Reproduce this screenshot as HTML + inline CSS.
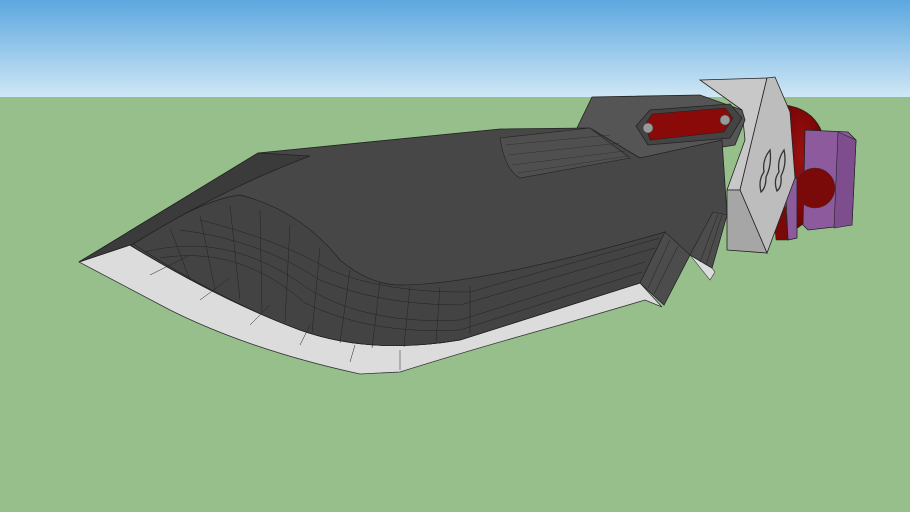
<!DOCTYPE html>
<html><head><meta charset="utf-8"><style>
html,body{margin:0;padding:0;width:910px;height:512px;overflow:hidden;background:#97bf8b}
svg{display:block}
</style></head><body>
<svg width="910" height="512" viewBox="0 0 910 512" xmlns="http://www.w3.org/2000/svg">
<defs>
<linearGradient id="sky" x1="0" y1="0" x2="0" y2="1">
<stop offset="0" stop-color="#5ba7df"/><stop offset="1" stop-color="#cfe7f5"/>
</linearGradient>
<radialGradient id="rd" cx="0.4" cy="0.4" r="0.7">
<stop offset="0" stop-color="#9a1010"/><stop offset="1" stop-color="#6a0000"/>
</radialGradient>
</defs>
<rect x="0" y="0" width="910" height="97" fill="url(#sky)"/>
<rect x="0" y="97" width="910" height="415" fill="#97bf8b"/>

<!-- pommel & purple -->
<path d="M785,105 Q822,110 826,150 Q828,215 790,232 Z" fill="url(#rd)" stroke="#222" stroke-width="0.8"/>
<polygon points="805,130 848,132 856,140 852,225 808,230 803,225" fill="#8e5a9e" stroke="#222" stroke-width="0.8"/>
<polygon points="838,132 856,140 852,225 834,228" fill="#7d4d8e" stroke="#222" stroke-width="0.6"/>
<circle cx="815" cy="188" r="20" fill="#7a0a0a" stroke="#333" stroke-width="0.5"/>
<polygon points="785,180 797,178 797,238 788,240" fill="#8e5a9e" stroke="#222" stroke-width="0.8"/>
<polygon points="773,208 785,200 788,240 776,240" fill="#7a0a0a" stroke="#222" stroke-width="0.5"/>

<!-- guard -->
<polygon points="700,80 767,78 740,190 727,190 745,140 742,110" fill="#c8c8c8" stroke="#222" stroke-width="0.8"/>
<polygon points="767,78 775,77 790,112 795,178 767,253 740,190" fill="#bdbdbd" stroke="#222" stroke-width="0.8"/>
<polygon points="727,190 740,190 767,253 727,250" fill="#a6a6a6" stroke="#222" stroke-width="0.8"/>
<path d="M770,150 q-8,10 -6,22 q-6,8 -3,20 q5,-4 5,-15 q6,-12 4,-27z" fill="none" stroke="#333" stroke-width="1.3"/>
<path d="M784,150 q-7,10 -5,22 q-6,8 -2,19 q5,-4 4,-15 q6,-12 3,-26z" fill="none" stroke="#333" stroke-width="1.3"/>

<!-- handle block -->
<polygon points="592,97 700,95 742,110 745,120 735,145 640,160 577,128" fill="#555" stroke="#222" stroke-width="0.8"/>
<polygon points="636,126 650,110 730,104 742,118 730,138 648,145" fill="#444" stroke="#222" stroke-width="0.8"/>
<polygon points="645,125 652,114 725,108 733,118 724,132 650,140" fill="#8a0a0a" stroke="#222" stroke-width="0.6"/>
<circle cx="648" cy="128" r="5" fill="#999" stroke="#444" stroke-width="0.6"/>
<circle cx="725" cy="120" r="5" fill="#999" stroke="#444" stroke-width="0.6"/>

<!-- white edge -->
<path d="M79,262 L128,244 Q220,300 300,330 Q370,355 460,340 L640,283 L662,307 L645,300 L560,325 Q470,350 400,372 L360,374 Q250,350 170,310 Z" fill="#dcdcdc" stroke="#333" stroke-width="0.8"/>
<polygon points="690,255 710,280 715,272 698,250" fill="#dcdcdc" stroke="#333" stroke-width="0.6"/>

<!-- main dark body -->
<path d="M79,262 L258,153 L500,129 L590,128 L640,158 L722,140 L727,215 L712,268 L690,255 L664,305 L640,283 L460,340 Q370,355 300,330 Q220,300 130,245 Z" fill="#474747" stroke="#222" stroke-width="0.8"/>
<!-- grid face -->
<path d="M133,244 Q200,200 240,195 Q300,210 340,260 Q370,285 400,285 Q480,285 665,232 L640,283 L460,340 Q370,355 300,330 Q220,300 133,244 Z" fill="#434343" stroke="#222" stroke-width="0.7"/>
<!-- tooth faces -->
<polygon points="665,232 690,255 664,305 640,283" fill="#4c4c4c" stroke="#222" stroke-width="0.6"/>
<polygon points="713,212 727,215 712,268 690,255" fill="#4c4c4c" stroke="#222" stroke-width="0.6"/>
<g stroke="#222" stroke-width="0.5" fill="none">
<path d="M145,252 Q230,230 310,290 Q370,325 460,320 L645,262"/>
<path d="M160,258 Q240,245 305,303 Q370,335 460,330 L642,272"/>
<path d="M180,230 Q260,240 320,280 Q380,305 460,305 L655,248"/>
<path d="M200,220 Q280,240 330,270 Q385,293 470,292 L660,238"/>
<line x1="170" y1="228" x2="190" y2="280"/><line x1="200" y1="215" x2="215" y2="290"/>
<line x1="230" y1="205" x2="240" y2="300"/><line x1="260" y1="210" x2="262" y2="312"/>
<line x1="290" y1="225" x2="285" y2="322"/><line x1="320" y1="248" x2="312" y2="333"/>
<line x1="350" y1="270" x2="340" y2="343"/><line x1="380" y1="282" x2="372" y2="348"/>
<line x1="410" y1="286" x2="404" y2="347"/><line x1="440" y1="287" x2="436" y2="342"/>
<line x1="470" y1="286" x2="470" y2="334"/>
<line x1="150" y1="275" x2="190" y2="255"/><line x1="200" y1="300" x2="230" y2="278"/>
<line x1="250" y1="325" x2="270" y2="305"/><line x1="300" y1="345" x2="310" y2="325"/>
<line x1="350" y1="362" x2="355" y2="345"/><line x1="400" y1="370" x2="400" y2="350"/>
<line x1="670" y1="240" x2="648" y2="288"/><line x1="678" y1="246" x2="654" y2="294"/>
<line x1="718" y1="214" x2="700" y2="262"/><line x1="722" y1="215" x2="706" y2="265"/>
</g>
<!-- spine bevel -->
<path d="M79,262 L258,153 L310,156 Q220,190 133,244 Z" fill="#3b3b3b" stroke="#222" stroke-width="0.8"/>
<!-- fuller -->
<path d="M500,138 Q505,170 520,178 L630,158 L590,128 Z" fill="#4f4f4f" stroke="#222" stroke-width="0.6"/>
<g stroke="#2a2a2a" stroke-width="0.4"><line x1="505" y1="145" x2="610" y2="135"/><line x1="508" y1="155" x2="620" y2="143"/><line x1="512" y1="165" x2="625" y2="151"/><line x1="518" y1="173" x2="628" y2="156"/></g>
</svg>
</body></html>
